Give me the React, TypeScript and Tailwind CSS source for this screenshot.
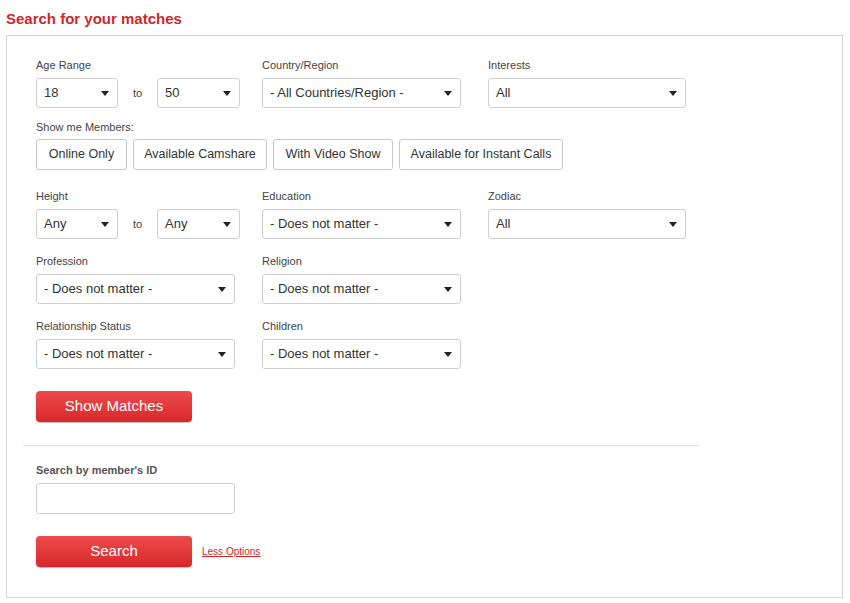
import React from "react";

const Caret = () => (
  <svg width="8" height="5" viewBox="0 0 8 5" className="shrink-0"><path d="M0 0h8L4 5z" fill="#222" /></svg>
);

function Sel({ v, w }: { v: string; w: string }) {
  return (
    <div className={`${w} h-[30px] border border-[#cfcfcf] rounded-[3px] bg-white flex items-center justify-between pl-[7px] pr-[8px] text-[13px] text-[#333]`}>
      <span>{v}</span>
      <Caret />
    </div>
  );
}

const Label = ({ t }: { t: string }) => <div className="text-[11px] text-[#444] h-[13px] leading-[13px] mb-[6px]">{t}</div>;

function Pair({ a, b }: { a: string; b: string }) {
  return (
    <div className="flex items-center w-[204px]">
      <Sel v={a} w="w-[82px]" />
      <span className="text-[11px] text-[#444] w-[39px] text-center">to</span>
      <Sel v={b} w="w-[83px]" />
    </div>
  );
}

const Btn = ({ t, w }: { t: string; w: string }) => (
  <div className={`${w} h-[31px] border border-[#c8c8c8] rounded-[3px] bg-white flex items-center justify-center text-[12.5px] text-[#333]`}>{t}</div>
);

const Red = ({ t }: { t: string }) => (
  <div className="w-[156px] h-[31px] rounded-[4px] bg-gradient-to-b from-[#ee4a4a] to-[#d8262a] text-white text-[15px] flex items-center justify-center shadow-[0_1px_1px_rgba(0,0,0,0.25)]">{t}</div>
);

export default function App() {
  return (
    <div className="w-[850px] h-[603px] bg-white relative" style={{ fontFamily: "Arial, 'Liberation Sans', sans-serif" }}>
      <div className="pl-[6px] pt-[8px] text-[15px] font-bold text-[#d0262c] h-[35px]">Search for your matches</div>
      <div className="ml-[6px] w-[837px] h-[563px] border border-[#d6d6d6] pl-[29px] pt-[23px]">
        <div className="flex gap-[22px]">
          <div className="w-[204px]"><Label t="Age Range" /><Pair a="18" b="50" /></div>
          <div className="w-[204px]"><Label t="Country/Region" /><Sel v="- All Countries/Region -" w="w-[199px]" /></div>
          <div><Label t="Interests" /><Sel v="All" w="w-[198px]" /></div>
        </div>
        <div className="mt-[13px]"><Label t="Show me Members:" /></div>
        <div className="flex gap-[6px] -mt-[1px]">
          <Btn t="Online Only" w="w-[91px]" />
          <Btn t="Available Camshare" w="w-[134px]" />
          <Btn t="With Video Show" w="w-[120px]" />
          <Btn t="Available for Instant Calls" w="w-[164px]" />
        </div>
        <div className="flex gap-[22px] mt-[20px]">
          <div className="w-[204px]"><Label t="Height" /><Pair a="Any" b="Any" /></div>
          <div className="w-[204px]"><Label t="Education" /><Sel v="- Does not matter -" w="w-[199px]" /></div>
          <div><Label t="Zodiac" /><Sel v="All" w="w-[198px]" /></div>
        </div>
        <div className="flex gap-[22px] mt-[16px]">
          <div className="w-[204px]"><Label t="Profession" /><Sel v="- Does not matter -" w="w-[199px]" /></div>
          <div><Label t="Religion" /><Sel v="- Does not matter -" w="w-[199px]" /></div>
        </div>
        <div className="flex gap-[22px] mt-[16px]">
          <div className="w-[204px]"><Label t="Relationship Status" /><Sel v="- Does not matter -" w="w-[199px]" /></div>
          <div><Label t="Children" /><Sel v="- Does not matter -" w="w-[199px]" /></div>
        </div>
        <div className="mt-[22px]"><Red t="Show Matches" /></div>
        <div className="-ml-[13px] w-[676px] border-t border-[#e2e2e2] mt-[23px]" />
        <div className="mt-[18px] text-[11px] font-bold text-[#555] h-[13px] leading-[13px]">Search by member's ID</div>
        <div className="mt-[6px] w-[199px] h-[31px] border border-[#cfcfcf] rounded-[3px]" />
        <div className="mt-[22px] flex items-center gap-[10px]">
          <Red t="Search" />
          <span className="text-[10px] text-[#d0262c] underline">Less Options</span>
        </div>
      </div>
    </div>
  );
}
